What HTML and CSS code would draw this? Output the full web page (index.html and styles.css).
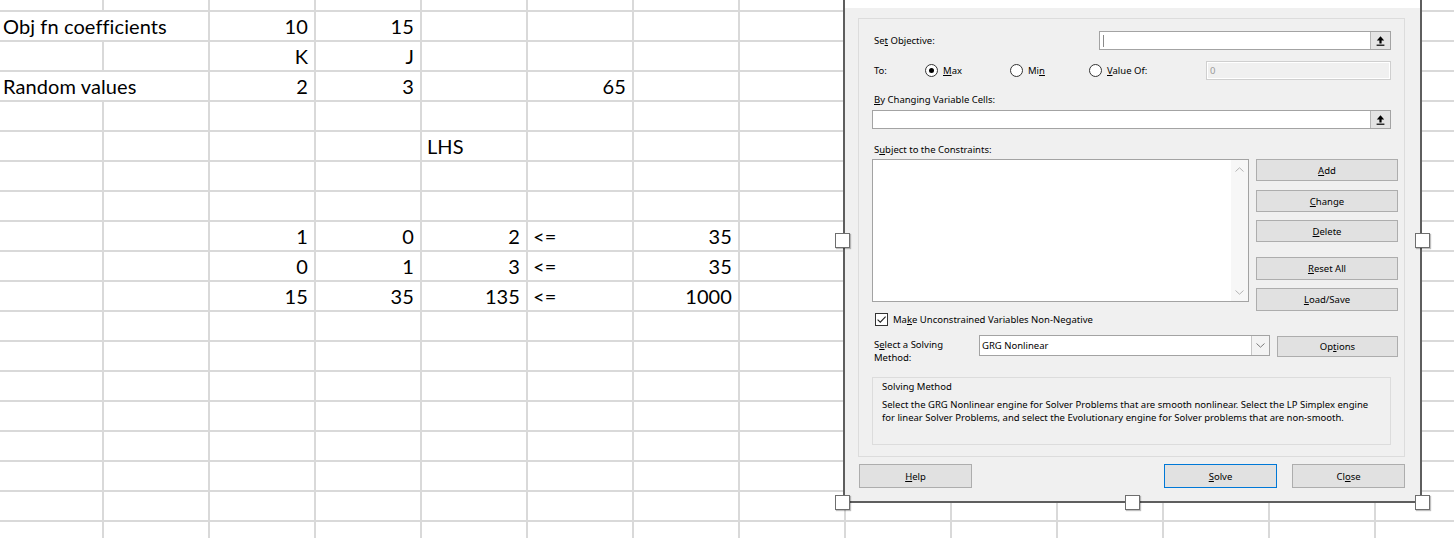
FILE: index.html
```html
<!DOCTYPE html>
<html lang="en">
<head>
<meta charset="utf-8">
<title>Solver Parameters</title>
<link rel="stylesheet" href="styles.css">
</head>
<body>
<div class="sheet">
  <div class="rows">
    <div class="row">
      <div class="cell wide">Obj fn coefficients</div>
      <div class="cell num">10</div>
      <div class="cell num">15</div>
    </div>
    <div class="row">
      <div class="cell"></div><div class="cell"></div>
      <div class="cell num">K</div>
      <div class="cell num">J</div>
    </div>
    <div class="row">
      <div class="cell wide">Random values</div>
      <div class="cell num">2</div>
      <div class="cell num">3</div>
      <div class="cell"></div>
      <div class="cell num">65</div>
    </div>
    <div class="row"></div>
    <div class="row">
      <div class="cell"></div><div class="cell"></div><div class="cell"></div><div class="cell"></div>
      <div class="cell">LHS</div>
    </div>
    <div class="row"></div>
    <div class="row"></div>
    <div class="row">
      <div class="cell"></div><div class="cell"></div>
      <div class="cell num">1</div>
      <div class="cell num">0</div>
      <div class="cell num">2</div>
      <div class="cell">&lt;=</div>
      <div class="cell num">35</div>
    </div>
    <div class="row">
      <div class="cell"></div><div class="cell"></div>
      <div class="cell num">0</div>
      <div class="cell num">1</div>
      <div class="cell num">3</div>
      <div class="cell">&lt;=</div>
      <div class="cell num">35</div>
    </div>
    <div class="row">
      <div class="cell"></div><div class="cell"></div>
      <div class="cell num">15</div>
      <div class="cell num">35</div>
      <div class="cell num">135</div>
      <div class="cell">&lt;=</div>
      <div class="cell num">1000</div>
    </div>
  </div>

  <div class="picture">
    <div class="titlebar"></div>
    <div class="dlg-body">
      <div class="panel">
        <div class="line r-obj">
          <span class="lbl">Se<u>t</u> Objective:</span>
          <div class="refbox w-obj">
            <span class="caret"></span>
            <span class="refbtn"><svg width="9" height="10" viewBox="0 0 9 10"><path d="M4.5 0.3 L8.2 4.6 H5.6 V7.6 H3.4 V4.6 H0.8 Z" fill="#000"/><rect x="0.6" y="8.6" width="7.8" height="1.2" fill="#000"/></svg></span>
          </div>
        </div>

        <div class="line r-to">
          <span class="lbl to-lbl">To:</span>
          <span class="opt opt-max"><span class="radio on"></span><span><u>M</u>ax</span></span>
          <span class="opt opt-min"><span class="radio"></span><span>Mi<u>n</u></span></span>
          <span class="opt"><span class="radio"></span><span><u>V</u>alue Of:</span></span>
          <div class="valbox">0</div>
        </div>

        <div class="lbl r-by"><u>B</u>y Changing Variable Cells:</div>
        <div class="refbox w-chg">
          <span class="refbtn"><svg width="9" height="10" viewBox="0 0 9 10"><path d="M4.5 0.3 L8.2 4.6 H5.6 V7.6 H3.4 V4.6 H0.8 Z" fill="#000"/><rect x="0.6" y="8.6" width="7.8" height="1.2" fill="#000"/></svg></span>
        </div>

        <div class="lbl r-sub">S<u>u</u>bject to the Constraints:</div>
        <div class="line r-list">
          <div class="listbox">
            <div class="scroll">
              <svg width="9" height="5" viewBox="0 0 9 5"><path d="M0.5 4.5 L4.5 0.8 L8.5 4.5" fill="none" stroke="#b4b4b4" stroke-width="1"/></svg>
              <svg width="9" height="5" viewBox="0 0 9 5"><path d="M0.5 0.5 L4.5 4.2 L8.5 0.5" fill="none" stroke="#b4b4b4" stroke-width="1"/></svg>
            </div>
          </div>
          <div class="btncol">
            <div class="btn b-add"><span><u>A</u>dd</span></div>
            <div class="btn b-chg"><span><u>C</u>hange</span></div>
            <div class="btn b-del"><span><u>D</u>elete</span></div>
            <div class="btn b-rst"><span><u>R</u>eset All</span></div>
            <div class="btn b-load"><span><u>L</u>oad/Save</span></div>
          </div>
        </div>

        <div class="line r-chk">
          <span class="chk"><svg width="11" height="11" viewBox="0 0 11 11"><path d="M1.6 5.6 L4.3 8.2 L9.6 2.6" fill="none" stroke="#222" stroke-width="1.1"/></svg></span>
          <span>Ma<u>k</u>e Unconstrained Variables Non-Negative</span>
        </div>

        <div class="line r-sel">
          <div class="lbl sel-lbl">S<u>e</u>lect a Solving<br>Method:</div>
          <div class="combo">
            <span>GRG Nonlinear</span>
            <span class="combo-btn"><svg width="9" height="5" viewBox="0 0 9 5"><path d="M0.5 0.5 L4.5 4.2 L8.5 0.5" fill="none" stroke="#7a7a7a" stroke-width="1"/></svg></span>
          </div>
          <div class="btn b-opt"><span>Op<u>t</u>ions</span></div>
        </div>

        <div class="group">
          <div class="group-title">Solving Method</div>
          <div class="group-text">Select the GRG Nonlinear engine for Solver Problems that are smooth nonlinear. Select the LP Simplex engine<br>for linear Solver Problems, and select the Evolutionary engine for Solver problems that are non-smooth.</div>
        </div>
      </div>

      <div class="line footer">
        <div class="btn b-help"><span><u>H</u>elp</span></div>
        <div class="btn b-solve"><span><u>S</u>olve</span></div>
        <div class="btn b-close"><span>Cl<u>o</u>se</span></div>
      </div>
    </div>

    <span class="handle h-lm"></span>
    <span class="handle h-rm"></span>
    <span class="handle h-bl"></span>
    <span class="handle h-bc"></span>
    <span class="handle h-br"></span>
  </div>
</div>
</body>
</html>
```

FILE: styles.css
```css
* { box-sizing: border-box; }
html, body { margin: 0; padding: 0; }
body { width: 1454px; height: 538px; overflow: hidden; background: #fff; }

.sheet {
  position: relative;
  width: 1454px;
  height: 538px;
  overflow: hidden;
  background-color: #fff;
  background-image:
    linear-gradient(to right, #d9d9d9 2px, transparent 2px),
    linear-gradient(to bottom, #d9d9d9 2px, transparent 2px);
  background-size: 106px 100%, 100% 30px;
  background-position: 102px 0, 0 10px;
  font-family: Lato, "Liberation Sans", sans-serif;
  font-size: 20px;
  letter-spacing: 0.1px;
  color: #000;
}

.rows { display: flex; flex-direction: column; padding-top: 12px; margin-left: -2px; }
.row { display: grid; grid-template-columns: repeat(7, 106px); height: 30px; }
.cell { height: 28px; line-height: 28px; padding: 0 8px 0 5px; white-space: nowrap; }
.num { text-align: right; }
.wide { grid-column: span 2; margin-right: 2px; background: #fff; }

/* ---------- dialog picture ---------- */
.picture {
  position: absolute;
  left: 843px;
  top: -20px;
  width: 579px;
  height: 523px;
  border: 2px solid #5e5e5e;
  background: #f0f0f0;
  display: flex;
  flex-direction: column;
  font-family: "Noto Sans", "Open Sans", sans-serif;
  font-size: 9.5px;
  letter-spacing: 0;
  color: #000;
}
.picture u { text-decoration: underline; text-underline-offset: 1px; }
.titlebar { height: 26px; background: #fff; flex: none; }
.dlg-body { flex: 1; padding: 10px 15px 0 13px; display: flex; flex-direction: column; }

.panel {
  height: 439px;
  border: 1px solid #dcdcdc;
  padding: 0 6px 0 13px;
  display: flex;
  flex-direction: column;
}
.line { display: flex; align-items: center; }
.lbl { padding-left: 2px; white-space: nowrap; }

.r-obj { margin-top: 12px; height: 19px; }
.refbox {
  display: flex;
  align-items: center;
  height: 19px;
  background: #fff;
  border: 1px solid #a3a3a3;
}
.w-obj { margin-left: auto; margin-right: 7px; width: 292px; }
.caret { width: 1px; height: 12px; background: #8a8a8a; margin-left: 3px; }
.refbtn {
  margin-left: auto;
  width: 20px;
  height: 17px;
  background: #e4e4e4;
  border-left: 1px solid #b5b5b5;
  display: flex;
  align-items: center;
  justify-content: center;
}

.r-to { margin-top: 11px; height: 19px; }
.to-lbl { width: 53px; }
.opt { display: flex; align-items: center; gap: 5px; white-space: nowrap; }
.opt-max { width: 85px; }
.opt-min { width: 79px; }
.radio {
  width: 13px; height: 13px;
  border: 1px solid #333;
  border-radius: 50%;
  background: #fff;
  display: flex; align-items: center; justify-content: center;
  flex: none;
}
.radio.on::after { content: ""; width: 5px; height: 5px; border-radius: 50%; background: #000; }
.valbox {
  margin-left: auto;
  margin-right: 7px;
  width: 185px;
  height: 19px;
  border: 1px solid #cfcfcf;
  box-shadow: inset 1px 1px 0 #fff, inset -1px -1px 0 #fff;
  background: #f0f0f0;
  color: #9a9a9a;
  padding-left: 3px;
  line-height: 17px;
}

.r-by { margin-top: 13px; height: 14px; line-height: 14px; }
.w-chg { margin-top: 3px; width: 519px; }
.r-sub { margin-top: 14px; height: 14px; line-height: 14px; }

.r-list { margin-top: 2px; align-items: flex-start; }
.listbox {
  width: 377px;
  height: 143px;
  background: #fff;
  border: 1px solid #a3a3a3;
  display: flex;
  justify-content: flex-end;
}
.scroll {
  width: 17px;
  background: #f7f7f7;
  display: flex;
  flex-direction: column;
  justify-content: space-between;
  align-items: center;
  padding: 7px 0 6px;
}
.btncol { margin-left: auto; width: 142px; display: flex; flex-direction: column; }
.btn {
  background: #e1e1e1;
  border: 1px solid #adadad;
  display: flex;
  align-items: center;
  justify-content: center;
  white-space: nowrap;
}
.b-add { height: 22px; }
.b-chg { height: 22px; margin-top: 9px; }
.b-del { height: 22px; margin-top: 8px; }
.b-rst { height: 23px; margin-top: 15px; }
.b-load { height: 23px; margin-top: 8px; }

.r-chk { margin-top: 2px; height: 13px; padding-left: 3px; gap: 5px; white-space: nowrap; }
.chk {
  width: 13px; height: 13px;
  border: 1px solid #333;
  background: #fff;
  display: flex; align-items: center; justify-content: center;
  flex: none;
}

.r-sel { margin-top: 9px; height: 23px; align-items: flex-start; }
.sel-lbl { width: 107px; line-height: 13px; padding-top: 3px; }
.combo {
  width: 291px;
  height: 21px;
  background: #fff;
  border: 1px solid #a3a3a3;
  display: flex;
  align-items: center;
  padding-left: 2px;
}
.combo-btn {
  margin-left: auto;
  width: 18px;
  height: 19px;
  background: #f3f3f3;
  border-left: 1px solid #c6c6c6;
  display: flex; align-items: center; justify-content: center;
}
.b-opt { margin-left: 7px; margin-top: 1px; width: 121px; height: 21px; }

.group {
  margin-top: 19px;
  width: 519px;
  height: 68px;
  border: 1px solid #dcdcdc;
  padding: 2px 8px 0 9px;
}
.group-title { line-height: 13px; }
.group-text { margin-top: 5px; line-height: 13px; white-space: nowrap; }

.footer { margin-top: 7px; height: 24px; }
.b-help { margin-left: 1px; width: 113px; height: 24px; }
.b-solve { margin-left: auto; width: 113px; height: 24px; border-color: #0078d7; }
.b-close { margin-left: 15px; width: 113px; height: 24px; }

/* selection handles of the picture */
.handle {
  position: absolute;
  width: 15px;
  height: 15px;
  background: #fff;
  border: 1px solid #6e6e6e;
  box-shadow: 1px 1px 1px rgba(0,0,0,0.25);
}
.h-lm { left: -10px; top: 251px; }
.h-rm { left: 570px; top: 251px; }
.h-bl { left: -10px; top: 513px; }
.h-bc { left: 280px; top: 513px; }
.h-br { left: 570px; top: 513px; }
```
